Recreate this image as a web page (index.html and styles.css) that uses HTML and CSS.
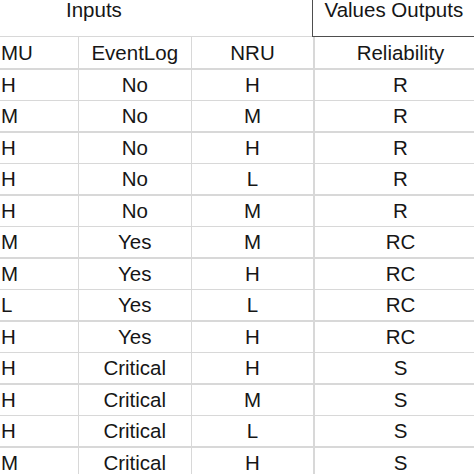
FILE: index.html
```html
<!DOCTYPE html>
<html>
<head>
<meta charset="utf-8">
<link rel="stylesheet" href="styles.css">
</head>
<body>
<div class="table">
  <div class="head">
    <div class="inputs"><span class="ht">Inputs</span></div>
    <div class="outputs"><span class="ht">Values Outputs</span></div>
  </div>
  <div class="grid">
    <div class="c l">MU</div><div class="c">EventLog</div><div class="c">NRU</div><div class="c">Reliability</div>
    <div class="c l">H</div><div class="c">No</div><div class="c">H</div><div class="c">R</div>
    <div class="c l">M</div><div class="c">No</div><div class="c">M</div><div class="c">R</div>
    <div class="c l">H</div><div class="c">No</div><div class="c">H</div><div class="c">R</div>
    <div class="c l">H</div><div class="c">No</div><div class="c">L</div><div class="c">R</div>
    <div class="c l">H</div><div class="c">No</div><div class="c">M</div><div class="c">R</div>
    <div class="c l">M</div><div class="c">Yes</div><div class="c">M</div><div class="c">RC</div>
    <div class="c l">M</div><div class="c">Yes</div><div class="c">H</div><div class="c">RC</div>
    <div class="c l">L</div><div class="c">Yes</div><div class="c">L</div><div class="c">RC</div>
    <div class="c l">H</div><div class="c">Yes</div><div class="c">H</div><div class="c">RC</div>
    <div class="c l">H</div><div class="c">Critical</div><div class="c">H</div><div class="c">S</div>
    <div class="c l">H</div><div class="c">Critical</div><div class="c">M</div><div class="c">S</div>
    <div class="c l">H</div><div class="c">Critical</div><div class="c">L</div><div class="c">S</div>
    <div class="c l">M</div><div class="c">Critical</div><div class="c">H</div><div class="c">S</div>
  </div>
</div>
</body>
</html>
```
FILE: styles.css
```css
html, body {
  margin: 0;
  padding: 0;
  background: #ffffff;
  overflow: hidden;
}
.table {
  width: 484px;
  font-family: "Liberation Sans", Arial, sans-serif;
  font-size: 20.5px;
  color: #161616;
}
.head {
  display: flex;
  height: 37px;
}
.inputs {
  width: 312px;
  box-sizing: border-box;
  border-bottom: 1.5px solid #d8d8d8;
  padding-left: 66px;
}
.outputs {
  flex: 1;
  box-sizing: border-box;
  border-left: 1.6px solid #4e4e4e;
  border-bottom: 1.6px solid #4e4e4e;
  padding-left: 11.5px;
}
.ht {
  display: block;
  line-height: 20px;
  padding-top: 0;
}
.grid {
  display: grid;
  grid-template-columns: 77.5px 111.5px 121px 172px;
  grid-template-rows: 31px;
  grid-auto-rows: 30px;
  gap: 1.5px;
  background: #d8d8d8;
  padding-bottom: 1.5px;
}
.c {
  background: #ffffff;
  display: flex;
  align-items: center;
  justify-content: center;
  line-height: 1;
  padding-top: 1px;
  box-sizing: border-box;
}
.c.l {
  justify-content: flex-start;
  padding-left: 1px;
}
```
